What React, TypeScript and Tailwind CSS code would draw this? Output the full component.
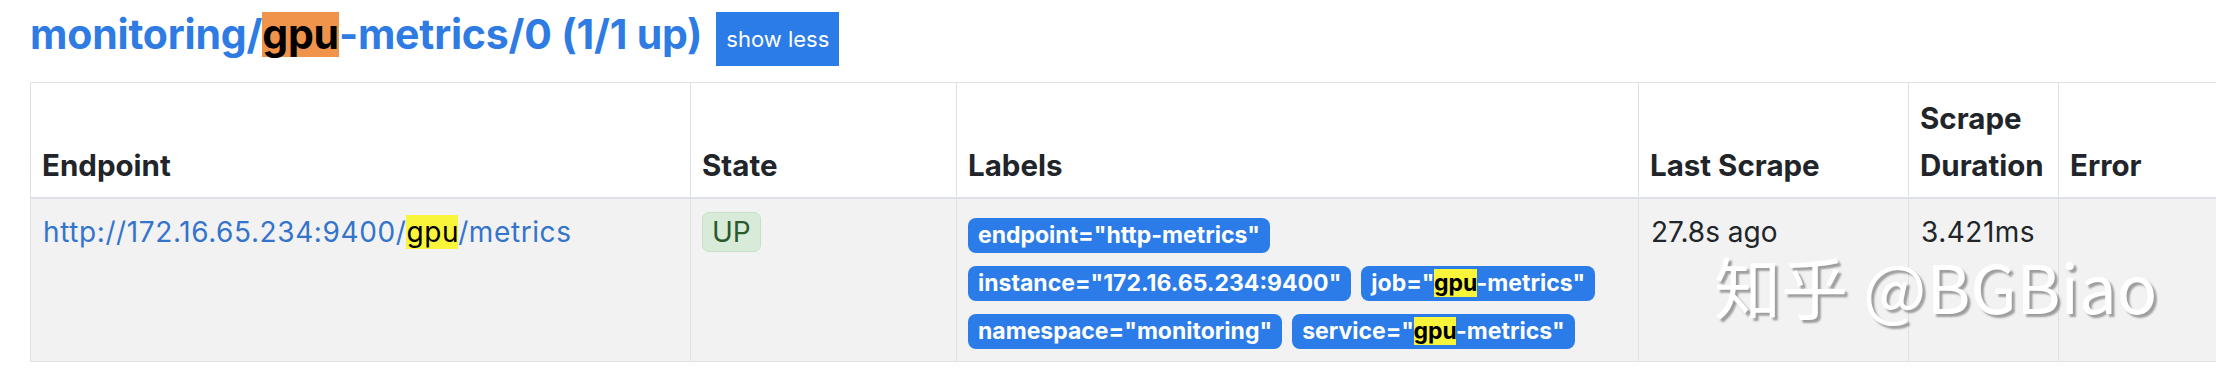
const labels: { name: string; value: string; hl?: boolean }[][] = [
  [{ name: "endpoint", value: "http-metrics" }],
  [
    { name: "instance", value: "172.16.65.234:9400" },
    { name: "job", value: "-metrics", hl: true },
  ],
  [
    { name: "namespace", value: "monitoring" },
    { name: "service", value: "-metrics", hl: true },
  ],
];

function Find({ active }: { active?: boolean }) {
  return (
    <span className={active ? "inline-block bg-[#f0934b] text-black" : "bg-[#f8f53a] text-black"}>gpu</span>
  );
}

// Prometheus targets page, one scrape pool expanded, with the browser's find
// highlight on "gpu".
export default function App() {
  return (
    <div className="relative h-[374px] w-[2216px] overflow-hidden bg-white font-['Inter','Liberation_Sans',sans-serif] text-[#212529]">
      <div className="flex h-[82px] items-start pl-[30px] pt-[12px]">
        <h2 className="text-[41px] font-bold leading-[45px] tracking-[-0.2px] text-[#2e7be3]">
          monitoring/<Find active />-metrics/0 (1/1 up)
        </h2>
        <button className="ml-[14px] flex h-[54px] items-center bg-[#2c7ce8] px-[10px] text-[22px] text-white">
          show less
        </button>
      </div>

      <div className="pl-[30px]">
        <table className="w-[2200px] table-fixed border-collapse">
          <colgroup>
            <col className="w-[660px]" />
            <col className="w-[266px]" />
            <col className="w-[682px]" />
            <col className="w-[270px]" />
            <col className="w-[150px]" />
            <col />
          </colgroup>
          <thead>
            <tr className="text-left align-bottom text-[29.5px] font-bold leading-[47px]">
              {["Endpoint", "State", "Labels", "Last Scrape", "Scrape Duration", "Error"].map((h) => (
                <th key={h} className="border border-b-2 border-[#dee2e6] px-[11px] pb-[8px] pt-[12px]">
                  {h}
                </th>
              ))}
            </tr>
          </thead>
          <tbody>
            <tr className="bg-[#f2f2f2] align-top text-[28px] leading-[42px]">
              <td className="border border-[#dee2e6] px-[12px] py-[12px]">
                <a className="tracking-[0.6px] text-[#3474cb]">
                  http://172.16.65.234:9400/<Find />/metrics
                </a>
              </td>
              <td className="border border-[#dee2e6] px-[11px] py-[12px]">
                <span className="inline-block rounded-[7px] border border-[#c6e0c6] bg-[#d8ebd8] px-[9px] leading-[38px] text-[#2a5a2c]">
                  UP
                </span>
              </td>
              <td className="border border-[#dee2e6] px-[11px] py-[12px]">
                <div className="flex flex-col gap-[13px] pt-[7px]">
                  {labels.map((row, i) => (
                    <div key={i} className="flex gap-[10px]">
                      {row.map((l) => (
                        <span
                          key={l.name}
                          className="rounded-[8px] bg-[#2b7ce8] px-[10px] text-[23px] font-bold leading-[35px] text-white"
                        >
                          {l.name}="{l.hl && <Find />}
                          {l.value}"
                        </span>
                      ))}
                    </div>
                  ))}
                </div>
              </td>
              <td className="border border-[#dee2e6] px-[12px] py-[12px]">27.8s ago</td>
              <td className="border border-[#dee2e6] px-[12px] py-[12px] tracking-[0.5px]">3.421ms</td>
              <td className="border border-[#dee2e6] px-[12px] py-[12px]"></td>
            </tr>
          </tbody>
        </table>
      </div>

      <div className="pointer-events-none absolute left-[1714px] top-[240px] font-['Noto_Sans_CJK_SC','Inter',sans-serif] text-[67px] leading-[90px] text-white [text-shadow:3px_3px_2px_rgba(0,0,0,0.35)]">
        知乎 @BGBiao
      </div>
    </div>
  );
}
